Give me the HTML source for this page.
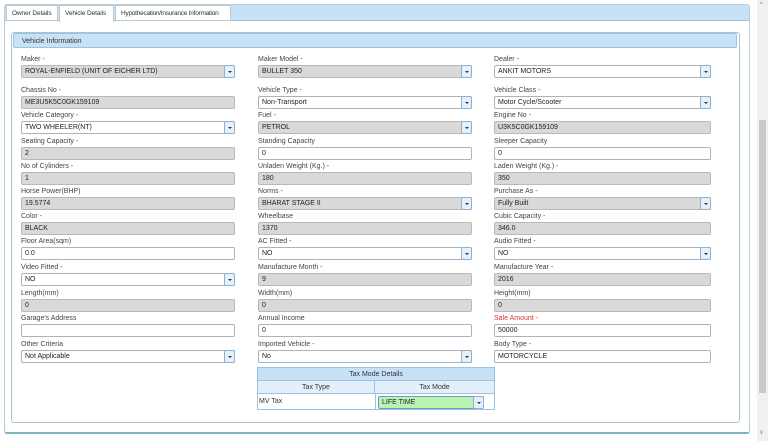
<!DOCTYPE html>
<html><head><style>
*{box-sizing:border-box;margin:0;padding:0}
body{width:768px;height:441px;overflow:hidden;background:#fff;font-family:"Liberation Sans",Arial,sans-serif;font-size:7px;color:#333;position:relative}
.a{position:absolute}
.t{white-space:nowrap;overflow:hidden;font-size:6.5px;letter-spacing:-0.1px}
.l{position:absolute;font-size:7px;color:#444;white-space:nowrap}
.i{position:absolute;height:13px;border:1px solid #a9b4bf;border-radius:2px;background:#fff;font-size:7px;padding:2px 0 0 3px;white-space:nowrap;color:#222}
.g{background:#d9d9d9;border-color:#b9b9b9}
.b{position:absolute;right:-1px;top:-1px;width:11px;height:13px;border:1px solid #8fb1cf;background:#e4f0fb;border-radius:2px}
.b:after{content:"";position:absolute;left:3px;top:5px;border-left:2px solid transparent;border-right:2px solid transparent;border-top:2px solid #333}
.c1{left:21px;width:214px}.c2{left:258px;width:214px}.c3{left:494px;width:217px}
.lc1{left:21px}.lc2{left:258px}.lc3{left:494px}
</style></head><body>
<div class="a" style="left:4px;top:4px;width:746px;height:430px;border:1px solid #b5cfd6;border-bottom:2px solid #7fb7bd;border-radius:3px"></div>
<div class="a" style="left:5px;top:5px;width:744px;height:16px;background:#c7e1f6;border-bottom:1px solid #9fc3df"></div>
<div class="a t" style="left:6px;top:5px;width:52px;height:16px;background:#fff;border:1px solid #b8c8d4;padding:4px 0 0 5px">Owner Details</div>
<div class="a t" style="left:59px;top:5px;width:55px;height:17px;background:#fff;border:1px solid #b8c8d4;border-bottom:none;padding:4px 0 0 5px">Vehicle Details</div>
<div class="a t" style="left:115px;top:5px;width:116px;height:16px;background:#fff;border:1px solid #b8c8d4;padding:4px 0 0 5px;letter-spacing:-0.25px">Hypothecation/Insurance Information</div>
<div class="a" style="left:11px;top:32px;width:729px;height:391px;border:1px solid #a8c7cc;border-radius:3px"></div>
<div class="a" style="left:13px;top:33px;width:724px;height:15px;background:#c7e1f6;border:1px solid #9fc3df;border-radius:2px;padding:4px 0 0 8px">Vehicle Information</div>
<div class="a" style="left:757px;top:0;width:11px;height:441px;background:#f1f1f1"></div>
<div class="a" style="left:759px;top:120px;width:7px;height:273px;background:#c9c9c9"></div>
<div class="a" style="left:760px;top:2px;font-size:6px;color:#777">^</div>
<div class="a" style="left:760px;top:430px;font-size:6px;color:#777">v</div>

<div class="l lc1" style="top:56px">Maker -</div><div class="i g c1" style="top:65px">ROYAL-ENFIELD (UNIT OF EICHER LTD)<div class="b"></div></div>
<div class="l lc2" style="top:56px">Maker Model -</div><div class="i g c2" style="top:65px">BULLET 350<div class="b"></div></div>
<div class="l lc3" style="top:56px">Dealer -</div><div class="i c3" style="top:65px">ANKIT MOTORS<div class="b"></div></div>
<div class="l lc1" style="top:87px">Chassis No -</div><div class="i g c1" style="top:96px">ME3U5K5C0GK159109</div>
<div class="l lc2" style="top:87px">Vehicle Type -</div><div class="i c2" style="top:96px">Non-Transport<div class="b"></div></div>
<div class="l lc3" style="top:87px">Vehicle Class -</div><div class="i c3" style="top:96px">Motor Cycle/Scooter<div class="b"></div></div>
<div class="l lc1" style="top:112px">Vehicle Category -</div><div class="i c1" style="top:121px">TWO WHEELER(NT)<div class="b"></div></div>
<div class="l lc2" style="top:112px">Fuel -</div><div class="i g c2" style="top:121px">PETROL<div class="b"></div></div>
<div class="l lc3" style="top:112px">Engine No -</div><div class="i g c3" style="top:121px">U3K5C0GK159109</div>
<div class="l lc1" style="top:138px">Seating Capacity -</div><div class="i g c1" style="top:147px">2</div>
<div class="l lc2" style="top:138px">Standing Capacity</div><div class="i c2" style="top:147px">0</div>
<div class="l lc3" style="top:138px">Sleeper Capacity</div><div class="i c3" style="top:147px">0</div>
<div class="l lc1" style="top:163px">No of Cylinders -</div><div class="i g c1" style="top:172px">1</div>
<div class="l lc2" style="top:163px">Unladen Weight (Kg.) -</div><div class="i g c2" style="top:172px">180</div>
<div class="l lc3" style="top:163px">Laden Weight (Kg.) -</div><div class="i g c3" style="top:172px">350</div>
<div class="l lc1" style="top:188px">Horse Power(BHP)</div><div class="i g c1" style="top:197px">19.5774</div>
<div class="l lc2" style="top:188px">Norms -</div><div class="i g c2" style="top:197px">BHARAT STAGE II<div class="b"></div></div>
<div class="l lc3" style="top:188px">Purchase As -</div><div class="i g c3" style="top:197px">Fully Built<div class="b"></div></div>
<div class="l lc1" style="top:213px">Color -</div><div class="i g c1" style="top:222px">BLACK</div>
<div class="l lc2" style="top:213px">Wheelbase</div><div class="i g c2" style="top:222px">1370</div>
<div class="l lc3" style="top:213px">Cubic Capacity -</div><div class="i g c3" style="top:222px">346.0</div>
<div class="l lc1" style="top:238px">Floor Area(sqm)</div><div class="i c1" style="top:247px">0.0</div>
<div class="l lc2" style="top:238px">AC Fitted -</div><div class="i c2" style="top:247px">NO<div class="b"></div></div>
<div class="l lc3" style="top:238px">Audio Fitted -</div><div class="i c3" style="top:247px">NO<div class="b"></div></div>
<div class="l lc1" style="top:264px">Video Fitted -</div><div class="i c1" style="top:273px">NO<div class="b"></div></div>
<div class="l lc2" style="top:264px">Manufacture Month -</div><div class="i g c2" style="top:273px">9</div>
<div class="l lc3" style="top:264px">Manufacture Year -</div><div class="i g c3" style="top:273px">2016</div>
<div class="l lc1" style="top:290px">Length(mm)</div><div class="i g c1" style="top:299px">0</div>
<div class="l lc2" style="top:290px">Width(mm)</div><div class="i g c2" style="top:299px">0</div>
<div class="l lc3" style="top:290px">Height(mm)</div><div class="i g c3" style="top:299px">0</div>
<div class="l lc1" style="top:315px">Garage's Address</div><div class="i c1" style="top:324px"></div>
<div class="l lc2" style="top:315px">Annual Income</div><div class="i c2" style="top:324px">0</div>
<div class="l lc3" style="top:315px;color:#d33">Sale Amount -</div><div class="i c3" style="top:324px">50000</div>
<div class="l lc1" style="top:341px">Other Criteria</div><div class="i c1" style="top:350px">Not Applicable<div class="b"></div></div>
<div class="l lc2" style="top:341px">Imported Vehicle -</div><div class="i c2" style="top:350px">No<div class="b"></div></div>
<div class="l lc3" style="top:341px">Body Type -</div><div class="i c3" style="top:350px">MOTORCYCLE</div>

<div class="a" style="left:257px;top:367px;width:238px;height:43px;border:1px solid #9fc3df;background:#fff"></div>
<div class="a" style="left:258px;top:368px;width:236px;height:13px;background:#c7e1f6;border-bottom:1px solid #9fc3df;text-align:center;padding-top:3px">Tax Mode Details</div>
<div class="a" style="left:258px;top:381px;width:117px;height:13px;background:#e3effa;border-right:1px solid #9fc3df;border-bottom:1px solid #9fc3df;text-align:center;padding-top:3px">Tax Type</div>
<div class="a" style="left:375px;top:381px;width:119px;height:13px;background:#e3effa;border-bottom:1px solid #9fc3df;text-align:center;padding-top:3px">Tax Mode</div>
<div class="a" style="left:375px;top:394px;width:1px;height:15px;background:#9fc3df"></div>
<div class="a" style="left:259px;top:398px">MV Tax</div>
<div class="i" style="left:378px;top:396px;width:106px;background:#b9f5b0;border-color:#6f9ccf">LIFE TIME<div class="b"></div></div>
</body></html>
